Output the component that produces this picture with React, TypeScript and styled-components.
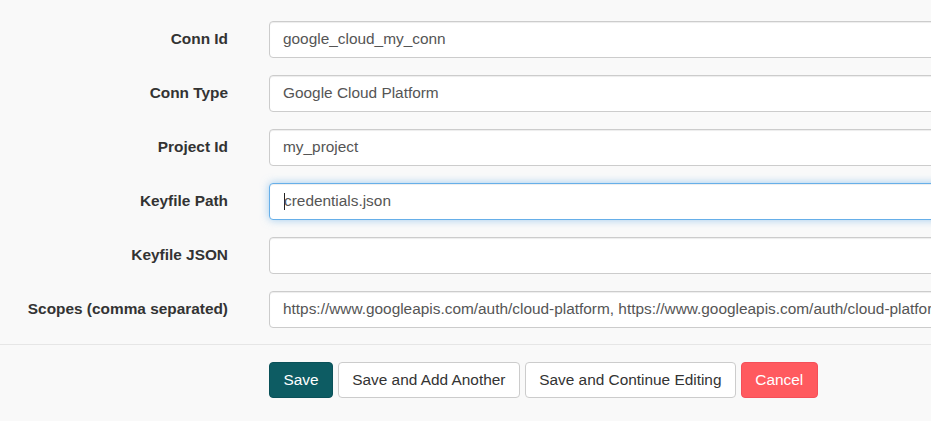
import React from "react";
import styled, { createGlobalStyle } from "styled-components";

const Global = createGlobalStyle`
  html, body {
    margin: 0;
    padding: 0;
    background: #f9f9f9;
    overflow: hidden;
  }
  body {
    font-family: "Liberation Sans", Arial, Helvetica, sans-serif;
    font-size: 15.4px;
    color: #333;
  }
`;

const Page = styled.div`
  width: 931px;
  height: 421px;
  overflow: hidden;
  background: #f9f9f9;
`;

const Form = styled.div`
  display: grid;
  grid-template-columns: 228px 720px;
  column-gap: 41px;
  row-gap: 17px;
  padding-top: 21px;
  padding-bottom: 16px;
  border-bottom: 1px solid #e6e6e6;
`;

const Label = styled.label`
  display: flex;
  align-items: center;
  justify-content: flex-end;
  font-weight: bold;
  font-size: 15.4px;
  line-height: 20px;
  color: #333;
  height: 37px;
  padding-bottom: 2px;
  box-sizing: border-box;
  white-space: nowrap;
`;

const Field = styled.div<{ $focused?: boolean }>`
  box-sizing: border-box;
  height: 37px;
  display: flex;
  align-items: center;
  padding: 0 13px 1px;
  background: #fff;
  border: 1px solid ${(p) => (p.$focused ? "#66afe9" : "#ccc")};
  border-radius: 4px;
  box-shadow: ${(p) =>
    p.$focused
      ? "inset 0 1px 1px rgba(0,0,0,.075), 0 0 8px rgba(102,175,233,.6)"
      : "inset 0 1px 1px rgba(0,0,0,.075)"};
  font-size: 15.4px;
  color: #555;
  white-space: nowrap;
  overflow: hidden;
`;

const Caret = styled.span`
  display: inline-block;
  width: 1px;
  height: 17px;
  background: #222;
  margin-right: -1px;
  margin-left: 1px;
`;

const Actions = styled.div`
  display: flex;
  gap: 5px;
  padding: 17px 0 0 269px;
`;

const Button = styled.button<{ $variant?: "primary" | "danger" | "default" }>`
  box-sizing: border-box;
  height: 36px;
  padding: 0 13.4px 1px;
  font-family: "Liberation Sans", Arial, Helvetica, sans-serif;
  font-size: 15.4px;
  border-radius: 4px;
  border: 1px solid
    ${(p) =>
      p.$variant === "primary" ? "#0a5159" : p.$variant === "danger" ? "#f54f59" : "#ccc"};
  background: ${(p) =>
    p.$variant === "primary" ? "#0d5c63" : p.$variant === "danger" ? "#ff5a5f" : "#fff"};
  color: ${(p) => (p.$variant === "default" || !p.$variant ? "#333" : "#fff")};
  cursor: pointer;
  white-space: nowrap;
`;

const fields: { label: string; value: string; focused?: boolean }[] = [
  { label: "Conn Id", value: "google_cloud_my_conn" },
  { label: "Conn Type", value: "Google Cloud Platform" },
  { label: "Project Id", value: "my_project" },
  { label: "Keyfile Path", value: "credentials.json", focused: true },
  { label: "Keyfile JSON", value: "" },
  {
    label: "Scopes (comma separated)",
    value:
      "https://www.googleapis.com/auth/cloud-platform, https://www.googleapis.com/auth/cloud-platform",
  },
];

export default function App() {
  return (
    <Page>
      <Global />
      <Form>
        {fields.map((f) => (
          <React.Fragment key={f.label}>
            <Label>{f.label}</Label>
            <Field $focused={f.focused}>
              {f.focused && <Caret />}
              {f.value}
            </Field>
          </React.Fragment>
        ))}
      </Form>
      <Actions>
        <Button $variant="primary">Save</Button>
        <Button $variant="default">Save and Add Another</Button>
        <Button $variant="default">Save and Continue Editing</Button>
        <Button $variant="danger">Cancel</Button>
      </Actions>
    </Page>
  );
}
